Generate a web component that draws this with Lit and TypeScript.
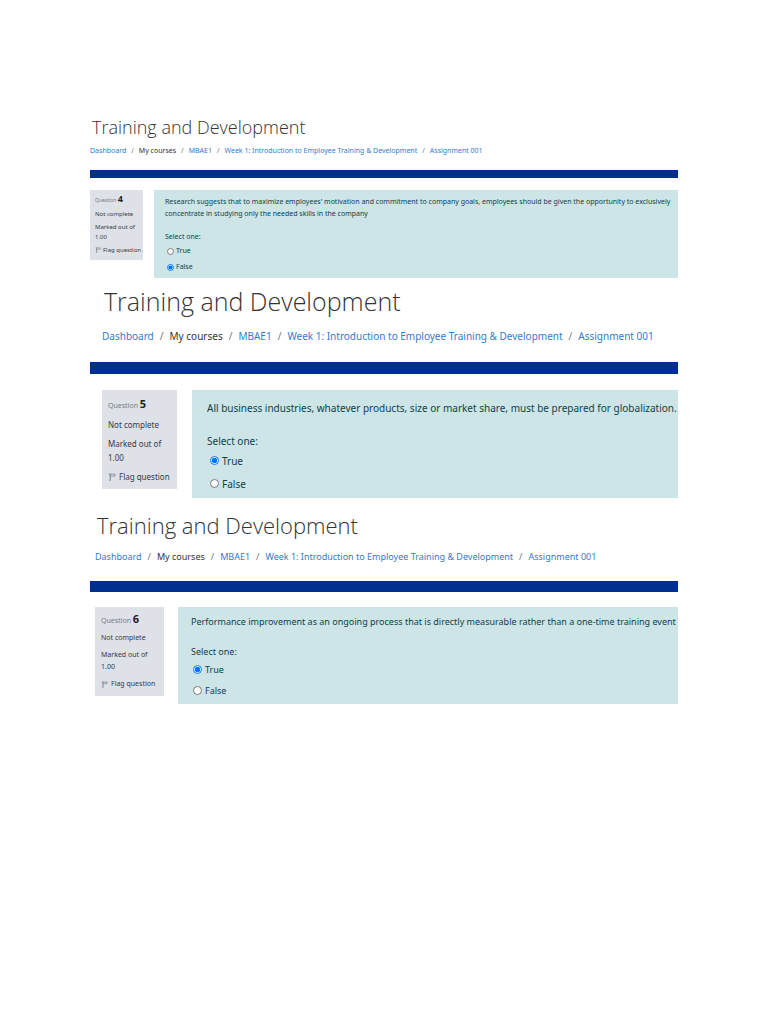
import { LitElement, html, css } from "lit";
import { customElement, property } from "lit/decorators.js";

interface Question {
  size: "small" | "medium" | "large";
  number: number;
  lines: string[];
  answer: boolean;
}

const QUESTIONS: Question[] = [
  {
    size: "small",
    number: 4,
    lines: [
      "Research suggests that to maximize employees' motivation and commitment to company goals, employees should be given the opportunity to exclusively",
      "concentrate in studying only the needed skills in the company",
    ],
    answer: false,
  },
  {
    size: "large",
    number: 5,
    lines: [
      "All business industries, whatever products, size or market share, must be prepared for globalization.",
    ],
    answer: true,
  },
  {
    size: "medium",
    number: 6,
    lines: [
      "Performance improvement as an ongoing process that is directly measurable rather than a one-time training event",
    ],
    answer: true,
  },
];

const CRUMBS = [
  { label: "Dashboard", link: true },
  { label: "My courses", link: false },
  { label: "MBAE1", link: true },
  { label: "Week 1: Introduction to Employee Training & Development", link: true },
  { label: "Assignment 001", link: true },
];

@customElement("quiz-question")
export class QuizQuestion extends LitElement {
  @property({ attribute: false }) question!: Question;

  static styles = css`
    :host {
      display: block;
    }
    .small {
      --title: 18px;
      --title-line: 26px;
      --title-top: 0px;
      --text: 7px;
      --line: 12px;
      --crumb-top: 5px;
      --crumb-gap: 5px;
      --bar-top: 13px;
      --bar: 8px;
      --body-top: 12px;
      --indent: 0px;
      --side: 53px;
      --gap: 11px;
      --side-pad: 4px 0 5px 5px;
      --side-text: 6px;
      --side-line: 10px;
      --side-gap: 3px;
      --word: 5px;
      --number: 9px;
      --number-line: 11px;
      --card-pad: 6px 0 3px 11px;
      --select-top: 11px;
      --row: 16px;
      --row-pad: 2px;
      --radio: 7px;
      --flag-gap: 2px;
    }
    .medium {
      --title: 22px;
      --title-line: 30px;
      --title-top: 12px;
      --text: 9px;
      --line: 14px;
      --crumb-top: 10px;
      --crumb-gap: 6px;
      --bar-top: 17px;
      --bar: 11px;
      --body-top: 15px;
      --indent: 5px;
      --side: 69px;
      --gap: 14px;
      --side-pad: 6px 0 6px 6px;
      --side-text: 7px;
      --side-line: 12px;
      --side-gap: 5px;
      --word: 7px;
      --number: 11px;
      --number-line: 12px;
      --card-pad: 8px 0 3px 13px;
      --select-top: 16px;
      --row: 21px;
      --row-pad: 2px;
      --radio: 9px;
      --flag-gap: 3px;
    }
    .large {
      --title: 25px;
      --title-line: 34px;
      --title-top: 6px;
      --text: 10px;
      --line: 16px;
      --crumb-top: 10px;
      --crumb-gap: 6px;
      --bar-top: 18px;
      --bar: 12px;
      --body-top: 16px;
      --indent: 12px;
      --side: 75px;
      --gap: 15px;
      --side-pad: 8px 0 5px 6px;
      --side-text: 8px;
      --side-line: 14px;
      --side-gap: 5px;
      --word: 7px;
      --number: 11px;
      --number-line: 14px;
      --card-pad: 10px 0 3px 15px;
      --select-top: 17px;
      --row: 23px;
      --row-pad: 3px;
      --radio: 9px;
      --flag-gap: 3px;
    }
    section {
      padding-top: var(--title-top);
      font-size: var(--text);
      line-height: var(--line);
    }
    h1 {
      margin: 0;
      padding-left: calc(var(--indent) + 2px);
      font: 300 var(--title) / var(--title-line) "Open Sans", sans-serif;
      color: #333;
    }
    .crumbs {
      display: flex;
      flex-wrap: wrap;
      gap: var(--crumb-gap);
      list-style: none;
      margin: var(--crumb-top) 0 0;
      padding: 0 0 0 var(--indent);
      color: #333;
    }
    .crumbs li {
      display: flex;
      gap: var(--crumb-gap);
    }
    .crumbs li + li::before {
      content: "/";
      color: #777;
    }
    a {
      color: #347bcb;
      text-decoration: none;
    }
    .bar {
      height: var(--bar);
      margin-top: var(--bar-top);
      background: #002f91;
    }
    .body {
      display: flex;
      align-items: flex-start;
      gap: var(--gap);
      margin-top: var(--body-top);
      padding-left: var(--indent);
    }
    .side {
      box-sizing: border-box;
      flex: 0 0 var(--side);
      min-width: 0;
      display: flex;
      flex-direction: column;
      gap: var(--side-gap);
      padding: var(--side-pad);
      background: #dfe1e8;
      color: #333c45;
      font-size: var(--side-text);
      line-height: var(--side-line);
    }
    .marks {
      max-width: 7em;
    }
    h2 {
      margin: 0;
      font-size: var(--word);
      font-weight: 400;
      line-height: var(--number-line);
      color: #777c84;
      white-space: nowrap;
    }
    h2 b {
      font-size: var(--number);
      line-height: 1;
      color: #1d2125;
    }
    .flag {
      display: flex;
      align-items: center;
      gap: var(--flag-gap);
      padding: 0;
      border: 0;
      background: none;
      font: inherit;
      color: inherit;
      white-space: nowrap;
    }
    .flag svg {
      width: var(--side-text);
      height: var(--side-text);
      flex: none;
    }
    .card {
      flex: 1;
      min-width: 0;
      overflow: hidden;
      padding: var(--card-pad);
      background: #cde5e6;
      color: #0f3f4c;
    }
    p {
      margin: 0;
      white-space: nowrap;
    }
    fieldset {
      min-width: 0;
      margin: var(--select-top) 0 0;
      padding: 0;
      border: 0;
    }
    legend {
      padding: 0;
    }
    label {
      display: flex;
      align-items: center;
      gap: var(--flag-gap);
      height: var(--row);
      padding-left: var(--row-pad);
    }
    input {
      width: var(--radio);
      height: var(--radio);
      margin: 0;
    }
  `;

  private option(value: boolean) {
    return html`<label>
      <input
        type="radio"
        name="q${this.question.number}"
        .checked=${this.question.answer === value}
      />
      ${value ? "True" : "False"}
    </label>`;
  }

  render() {
    const q = this.question;
    return html`
      <section class=${q.size}>
        <h1>Training and Development</h1>
        <nav aria-label="Breadcrumb">
          <ol class="crumbs">
            ${CRUMBS.map(
              (c) => html`<li>${c.link ? html`<a href="#">${c.label}</a>` : html`<span>${c.label}</span>`}</li>`
            )}
          </ol>
        </nav>
        <div class="bar"></div>
        <div class="body">
          <div class="side">
            <h2>Question <b>${q.number}</b></h2>
            <div>Not complete</div>
            <div class="marks">Marked out of 1.00</div>
            <button class="flag" type="button">
              <svg viewBox="0 0 8 8" fill="none" stroke="#68717c" aria-hidden="true">
                <path stroke-width="0.9" d="M2.2 0.8V8" />
                <path stroke-width="0.7" d="M0.6 1.2H2.2C3.6 0.4 4.8 1.8 7 1V3C5.2 3.8 3.8 2.4 2.2 3.2" />
              </svg>
              Flag question
            </button>
          </div>
          <div class="card">
            ${q.lines.map((line) => html`<p>${line}</p>`)}
            <fieldset>
              <legend>Select one:</legend>
              ${this.option(true)} ${this.option(false)}
            </fieldset>
          </div>
        </div>
      </section>
    `;
  }
}

@customElement("app-root")
export class AppRoot extends LitElement {
  static styles = css`
    :host {
      display: block;
      box-sizing: border-box;
      min-height: 100vh;
      padding: 114px 90px;
      background: #fff;
      font-family: "Noto Sans", sans-serif;
    }
  `;

  render() {
    return QUESTIONS.map((q) => html`<quiz-question .question=${q}></quiz-question>`);
  }
}
